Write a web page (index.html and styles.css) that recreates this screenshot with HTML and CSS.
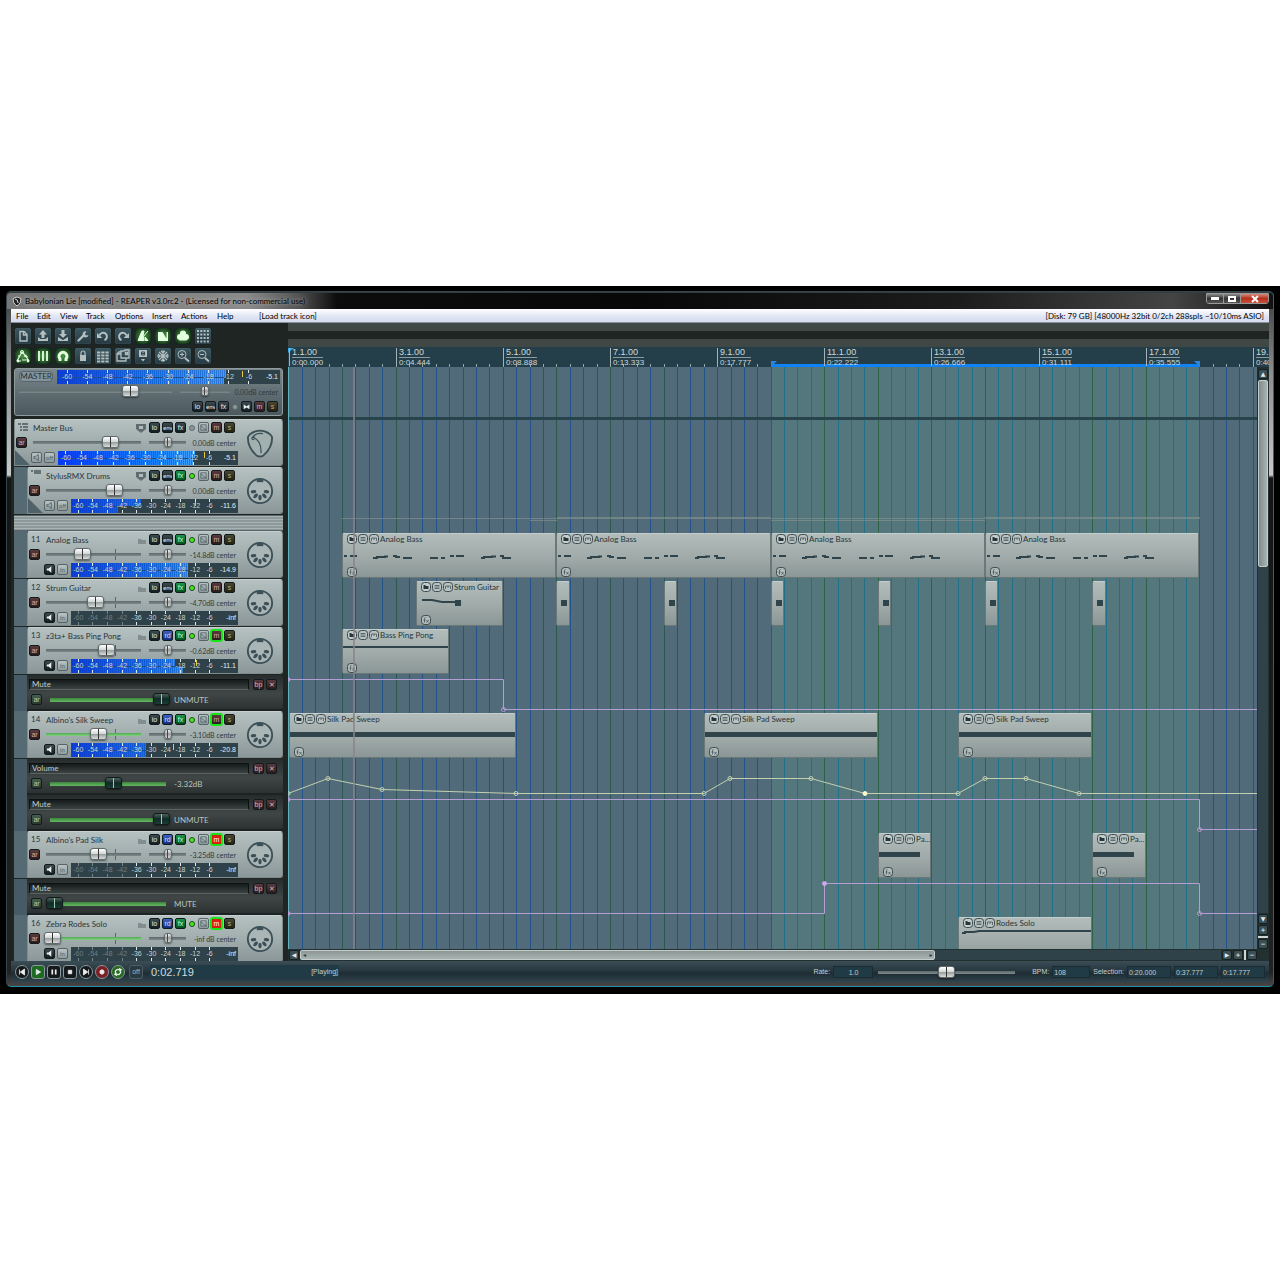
FILE: index.html
```html
<!DOCTYPE html>
<html lang="en">
<head>
<meta charset="utf-8">
<title>Babylonian Lie - REAPER</title>
<link rel="stylesheet" href="styles.css">
</head>
<body>
<svg class="sprite" width="0" height="0" aria-hidden="true">
  <symbol id="new" viewBox="0 0 18 18"><path d="M6 4.500h4l3 3v6.500H6zM9.500 5v3H13" fill="none" stroke="currentColor" stroke-width="1.400"/></symbol>
  <symbol id="open" viewBox="0 0 18 18"><path d="M9 3l4 4.500h-2.500V11h-3V7.500H5zM4 10v4h10v-4l-2.500 2h-5z" fill="currentColor"/></symbol>
  <symbol id="save" viewBox="0 0 18 18"><path d="M9 11l4-4h-2.500V3h-3v4H5zM4 10v4h10v-4l-5 3z" fill="currentColor"/></symbol>
  <symbol id="wrench" viewBox="0 0 18 18"><path d="M4.500 13.500l4.500-4.500" stroke="currentColor" stroke-width="2.400" stroke-linecap="round"/><path d="M12.500 4.500a3 3 0 1 0 2 3.500l-2.500 .5-1-1.500z" fill="currentColor"/></symbol>
  <symbol id="undo" viewBox="0 0 18 18"><path d="M5.500 8.500a3.800 3.800 0 1 1 5 4.600" fill="none" stroke="currentColor" stroke-width="2"/><path d="M3 6v5h5.500z" fill="currentColor"/></symbol>
  <symbol id="redo" viewBox="0 0 18 18"><path d="M12.500 8.500a3.800 3.800 0 1 0-5 4.600" fill="none" stroke="currentColor" stroke-width="2"/><path d="M15 6v5H9.500z" fill="currentColor"/></symbol>
  <symbol id="metronome" viewBox="0 0 18 18"><path d="M4 13.500L8 4h2l-1 5 1 4.500zM9 10l5-6M11 10l3 3.500h-3z" fill="currentColor" stroke="currentColor" stroke-width="1"/></symbol>
  <symbol id="xfade" viewBox="0 0 18 18"><path d="M4 5h4.500l4 6.500V5H14v9H4z" fill="currentColor"/></symbol>
  <symbol id="group" viewBox="0 0 18 18"><circle cx="9" cy="6.500" r="3" fill="currentColor"/><circle cx="6" cy="10" r="3" fill="currentColor"/><circle cx="12" cy="10" r="3" fill="currentColor"/><path d="M5 13.500h8l-4-4z" fill="currentColor"/></symbol>
  <symbol id="dots" viewBox="0 0 18 18"><path d="M3 4h12M3 7.500h12M3 11h12M3 14.500h12" stroke="currentColor" stroke-width="2" stroke-dasharray="2 1.300"/></symbol>
  <symbol id="env" viewBox="0 0 18 18"><path d="M3 14l5-9 3 3 4 6M4 9h2m2 4h4m-8 1h3m6-5v4" fill="none" stroke="currentColor" stroke-width="1.100"/><circle cx="8" cy="5" r="1.500" fill="none" stroke="currentColor"/><circle cx="11.500" cy="9" r="1.300" fill="currentColor"/><circle cx="4" cy="14" r="1.400" fill="currentColor"/><circle cx="14" cy="14" r="1.400" fill="currentColor"/></symbol>
  <symbol id="bars" viewBox="0 0 18 18"><path d="M5 4v10M9 4v10M13 4v10" stroke="currentColor" stroke-width="1.800"/></symbol>
  <symbol id="snap" viewBox="0 0 18 18"><path d="M6 14v-2a4 4 0 1 1 6 0v2" fill="none" stroke="currentColor" stroke-width="3"/></symbol>
  <symbol id="lock" viewBox="0 0 18 18"><path d="M6 8h6v6H6z" fill="currentColor"/><path d="M7 8V6a2 2 0 0 1 4 0v2" fill="none" stroke="currentColor" stroke-width="1.200"/></symbol>
  <symbol id="table" viewBox="0 0 18 18"><path d="M3 5.500h12M3 8.500h12M3 11.500h12M3 14.500h12" stroke="currentColor" stroke-width="2" stroke-dasharray="3.300 .9"/></symbol>
  <symbol id="files" viewBox="0 0 18 18"><path d="M7 7H3v7h9v-3M3 7l2-2h2M7 11V4h3l1-1h4v8zM11.500 5.500h2v2h-2z" fill="none" stroke="currentColor" stroke-width="1.300"/></symbol>
  <symbol id="marker" viewBox="0 0 18 18"><path d="M5 3h8v7H5zM7 12h4l-2 2.500z" fill="currentColor"/><path d="M7.500 5v3h3V5zM8 6.500h2" fill="none" stroke="#33474e"/></symbol>
  <symbol id="flake" viewBox="0 0 18 18"><path d="M9 3v12M3 9h12M5 5l8 8M13 5l-8 8M7 4l2 2 2-2M7 14l2-2 2 2M4 7l2 2-2 2m10-4l-2 2 2 2" stroke="currentColor" fill="none" stroke-width="1.200"/></symbol>
  <symbol id="zin" viewBox="0 0 18 18"><circle cx="8" cy="7.500" r="4" fill="none" stroke="currentColor"/><path d="M6 7.500h4M8 5.500v4" stroke="currentColor"/><path d="M11 11l4 3.500" stroke="currentColor" stroke-width="2"/></symbol>
  <symbol id="zout" viewBox="0 0 18 18"><circle cx="8" cy="7.500" r="4" fill="none" stroke="currentColor"/><path d="M6 7.500h4" stroke="currentColor"/><path d="M11 11l4 3.500" stroke="currentColor" stroke-width="2"/></symbol>
  <symbol id="din" viewBox="0 0 30 30"><circle cx="15" cy="15" r="13" fill="#aab6b6" stroke="#3b5057" stroke-width="2"/><path d="M11.500 2h7v3.500h-7z" fill="#3b5057"/><g fill="#3b5057"><ellipse cx="15" cy="22" rx="1.800" ry="3"/><ellipse cx="15" cy="22" rx="1.800" ry="3" transform="rotate(42 15 15)"/><ellipse cx="15" cy="22" rx="1.800" ry="3" transform="rotate(-42 15 15)"/><ellipse cx="15" cy="22" rx="1.800" ry="3" transform="rotate(84 15 15)"/><ellipse cx="15" cy="22" rx="1.800" ry="3" transform="rotate(-84 15 15)"/></g></symbol>
  <symbol id="pick" viewBox="0 0 30 30"><path d="M2 9Q3 5 10 2.500 15 1 20 2.500 27 5 28 9 28 20 19 28q-4 3-8 0Q2 20 2 9z" fill="#a3b0b0" stroke="#3b5057" stroke-width="2"/><path d="M6 10Q11 3 18 5q-9-1-10 4 9 4 8 17M6 10q1 2 3 1" fill="none" stroke="#3b5057" stroke-width="1.300"/></symbol>
  <symbol id="folder" viewBox="0 0 12 10"><path d="M3 4h3l1 1h4v4H3z" fill="#808e90"/></symbol>
  <symbol id="folderbig" viewBox="0 0 12 10"><path d="M1 1h10v5L6 10 1 6zM4 3h4v3H4z" fill="#5e6c70" fill-rule="evenodd"/></symbol>
  <symbol id="phase" viewBox="0 0 10 10"><path d="M2 2h6v6H2zM2 3l6 5" fill="none" stroke="#5a6a6d"/></symbol>
  <symbol id="speaker" viewBox="0 0 10 10"><path d="M2 4h2l3-2.500v7L4 6H2z" fill="currentColor"/></symbol>
  <symbol id="speakeroff" viewBox="0 0 10 10"><path d="M2 4h2l3-2.500v7L4 6H2z" fill="none" stroke="currentColor"/></symbol>
  <symbol id="take" viewBox="0 0 10 10"><rect x=".5" y=".5" width="9" height="9" rx="3" fill="#c3cdcb" stroke="#3a4a4e"/><path d="M2.500 3h2v1h3v3h-5zM4.500 4h3v2.500h-3z" fill="#26363a"/></symbol>
  <symbol id="notes" viewBox="0 0 10 10"><rect x=".5" y=".5" width="9" height="9" rx="3" fill="#b9c4c2" stroke="#3a4a4e"/><path d="M2.500 3.500h5M2.500 5h5M2.500 6.500h5" stroke="#46565a" stroke-width=".8"/></symbol>
  <symbol id="mutei" viewBox="0 0 10 10"><rect x=".5" y=".5" width="9" height="9" rx="3" fill="#b9c4c2" stroke="#3a4a4e"/><path d="M2.500 7V4h5v3M5 4v2" fill="none" stroke="#46565a" stroke-width=".8"/></symbol>
  <symbol id="fxi" viewBox="0 0 10 10"><rect x=".5" y=".5" width="9" height="9" rx="3" fill="#b0bbb9" stroke="#3a4a4e"/><path d="M3.500 7.500V3.500q0-1 1-1M2.500 5h2M5.500 5l2 2.500m0-2.500l-2 2.500" fill="none" stroke="#46565a" stroke-width=".8"/></symbol>
  <symbol id="logo" viewBox="0 0 10 10"><path d="M1 2.500q4-3 8 0Q9 7 6 9.500H4Q1 7 1 2.500z" fill="#222" stroke="#ccc"/><path d="M3 3q3 0 3 4" fill="none" stroke="#ddd"/></symbol>
</svg>

<main class="desktop">
  <div class="window">
    <header class="titlebar">
      <svg class="logo"><use href="#logo"/></svg>
      <h1>Babylonian Lie [modified] - REAPER v3.0rc2 - (Licensed for non-commercial use)</h1>
      <div class="caption">
        <button aria-label="Minimize"><i class="min"></i></button><button aria-label="Maximize"><i class="max"></i></button><button class="close" aria-label="Close"><svg width="8" height="8" viewBox="0 0 8 8"><path d="M1 1l6 6M7 1L1 7" stroke="#fff" stroke-width="2"/></svg></button>
      </div>
    </header>
    <nav class="menu">
      <button class="m-file">File</button><button class="m-edit">Edit</button><button class="m-view">View</button><button class="m-track">Track</button><button class="m-options">Options</button><button class="m-insert">Insert</button><button class="m-actions">Actions</button><button class="m-help">Help</button>
      <span>[Load track icon]</span>
      <span class="status">[Disk: 79 GB] [48000Hz 32bit 0/2ch 288spls ~10/10ms ASIO]</span>
    </nav>

    <div class="workspace">
      <section class="panel">
        <div class="toolbar">
          <button aria-label="New"><svg><use href="#new"/></svg></button>
          <button aria-label="Open"><svg><use href="#open"/></svg></button>
          <button aria-label="Save"><svg><use href="#save"/></svg></button>
          <button aria-label="Settings"><svg><use href="#wrench"/></svg></button>
          <button aria-label="Undo"><svg><use href="#undo"/></svg></button>
          <button aria-label="Redo"><svg><use href="#redo"/></svg></button>
          <button class="on" aria-label="Metronome"><svg><use href="#metronome"/></svg></button>
          <button class="on" aria-label="Crossfade"><svg><use href="#xfade"/></svg></button>
          <button class="on" aria-label="Grouping"><svg><use href="#group"/></svg></button>
          <button aria-label="Ripple"><svg><use href="#dots"/></svg></button>
          <button class="on" aria-label="Envelopes"><svg><use href="#env"/></svg></button>
          <button class="on" aria-label="Grid"><svg><use href="#bars"/></svg></button>
          <button class="on" aria-label="Snap"><svg><use href="#snap"/></svg></button>
          <button aria-label="Lock"><svg><use href="#lock"/></svg></button>
          <button aria-label="Mixer"><svg><use href="#table"/></svg></button>
          <button aria-label="Media"><svg><use href="#files"/></svg></button>
          <button aria-label="Marker"><svg><use href="#marker"/></svg></button>
          <button aria-label="Freeze"><svg><use href="#flake"/></svg></button>
          <button aria-label="Zoom in"><svg><use href="#zin"/></svg></button>
          <button aria-label="Zoom out"><svg><use href="#zout"/></svg></button>
        </div>
        <div class="tracklist" id="tracks"></div>
      </section>

      <section class="arrange">
        <div class="band"></div>
        <div class="band lower"></div>
        <div class="ruler" id="ruler"></div>
        <div class="canvas-row">
          <div class="canvas" id="canvas">
            <svg class="layer" id="grid"></svg>
            <div class="lanes" id="lanes"></div>
            <svg class="layer over" id="overlay"></svg>
          </div>
          <div class="vscroll">
            <button aria-label="Scroll up">▲</button>
            <div class="rail"><i></i></div>
            <button aria-label="Scroll down">▼</button>
            <button aria-label="Zoom in vertically">+</button><b></b>
            <button aria-label="Zoom out vertically">−</button>
          </div>
        </div>
        <div class="hscroll">
          <button aria-label="Scroll left">◀</button>
          <div class="rail"><i><span>◂</span><span>▸</span></i></div>
          <button aria-label="Scroll right">▶</button>
          <button aria-label="Zoom in horizontally">+</button><b></b>
          <button aria-label="Zoom out horizontally">−</button>
        </div>
      </section>
    </div>

    <footer class="transport">
      <div class="keys">
        <button aria-label="Start"><svg viewBox="0 0 14 14"><path d="M4 4v6M10 3.500v7L5 7z"/></svg></button>
        <button class="play" aria-label="Play"><svg viewBox="0 0 14 14"><path d="M5 4v6l5-3z"/></svg></button>
        <button class="sq" aria-label="Pause"><svg viewBox="0 0 14 14"><path d="M4 4h2v6H4zM8 4h2v6H8z" stroke="none"/></svg></button>
        <button class="sq" aria-label="Stop"><svg viewBox="0 0 14 14"><path d="M5 5h4v4H5z"/></svg></button>
        <button aria-label="End"><svg viewBox="0 0 14 14"><path d="M10 4v6M4 3.500v7L9 7z"/></svg></button>
        <button class="rec" aria-label="Record"><svg viewBox="0 0 14 14"><circle cx="7" cy="7" r="2.500"/></svg></button>
        <button class="loop" aria-label="Repeat"><svg viewBox="0 0 14 14"><path d="M4 8a3 3 0 0 1 5-3M10 6a3 3 0 0 1-5 3" fill="none" stroke-width="1.500"/><path d="M8 2l4 2-3 3zM6 12l-4-2 3-3z" stroke="none"/></svg></button>
        <button class="off">off</button>
      </div>
      <div class="clock"><output>0:02.719</output><span>[Playing]</span></div>
      <div class="fields">
        <label for="rate">Rate:</label><input id="rate" class="field rate" value="1.0">
        <input type="range" class="knob rateslider" value="50" aria-label="Playback rate">
        <label for="bpm">BPM:</label><input id="bpm" class="field bpm" value="108">
        <label for="sel">Selection:</label>
        <input id="sel" class="field" value="0:20.000"><input class="field" value="0:37.777" aria-label="Selection end"><input class="field" value="0:17.777" aria-label="Selection length">
      </div>
    </footer>
  </div>
</main>
<script src="app.js"></script>
</body>
</html>
```
FILE: styles.css
```css
* { box-sizing: border-box; }
body { margin: 0; min-height: 100vh; display: flex; align-items: center; background: #fff; font: 8px/10px "Liberation Sans", Arial, sans-serif; }
button, input { font: inherit; margin: 0; padding: 0; border: 0; }
svg { display: block; }
.sprite { position: absolute; }
.desktop { flex: 1; min-width: 0; background: #000; padding: 5px 6px 7px; }
.window {
  padding: 1px 4px 3px; border: 1px solid #30474e; border-bottom-color: #2390a8; border-right-color: #1d6b7c; border-radius: 5px;
  background: linear-gradient(#3a3a3a 0, #8c8c8c 80px, #c8c8c8 183px, #151515 186px, #222 680px, #4a4545);
}

/* Title and menu */
.titlebar { display: flex; align-items: center; height: 16px; margin: 0 -4px; padding-left: 5px; background: linear-gradient(90deg, #777 0, #8a8a8a 240px, #555 290px, #0c0c0c 330px, #080808 50%, #1c1c1c 75%, #444 92%, #111); border-radius: 4px 4px 0 0; }
.logo { width: 10px; height: 10px; margin-right: 3px; }
.titlebar h1 { margin: 0; font: 8px/12px Lato, sans-serif; color: #000; text-shadow: 0 0 4px #ccc; white-space: nowrap; flex: 1; }
.caption { display: flex; align-self: flex-start; margin-right: 4px; border: 1px solid #999; border-radius: 0 0 3px 3px; overflow: hidden; }
.caption button { width: 17px; height: 9px; display: grid; place-items: center; background: linear-gradient(#8c8c8c, #333 50%, #555); border-right: 1px solid #999; }
.caption .close { width: 27px; background: linear-gradient(#d48a7c, #b5301c 50%, #c9503a); border: 0; }
.min { width: 8px; height: 3px; background: #fff; }
.max { width: 8px; height: 6px; border: 2px solid #fff; }
.menu { display: flex; align-items: center; height: 14px; padding: 1px 5px 0; background: linear-gradient(#fff, #dfe4f4 60%, #d5dbee); font: 8px/12px Lato, sans-serif; color: #000; border-bottom: 1px solid #8a8f9c; white-space: nowrap; }
.menu button { background: none; text-align: left; color: inherit; }
.m-view { width: 26px; } .m-track { width: 29px; }
.m-options { width: 37px; } .m-insert { width: 29px; } .m-actions { width: 36px; }
.m-file { width: 21px; } .m-edit { width: 23px; } .m-help { width: 42px; }
.status { margin-left: auto; }

.workspace { display: grid; grid-template-columns: 277px minmax(0, 1fr); height: 638px; background: #1e2523; }
.panel { display: flex; flex-direction: column; min-height: 0; padding: 4px 5px 0 3px; }

/* Toolbar */
.toolbar { display: grid; grid-template-columns: repeat(10, 18px); align-content: start; gap: 2px; height: 40px; flex: none; }
.toolbar button { width: 18px; height: 18px; border-radius: 3px; border: 1px solid #1a2528; background: linear-gradient(#3c5760, #263a42); color: #b4bfc0; box-shadow: inset 0 0 1px #7b9199; }
.toolbar svg { width: 18px; height: 18px; margin: -1px; }
.toolbar .on { color: #e4ffe0; background: radial-gradient(#4d9a4a, #16351a 80%); box-shadow: inset 0 0 1px #000; }

/* Track list */
.tracklist { flex: 1; min-height: 0; overflow: hidden; }
.track { display: flex; height: 48px; padding-bottom: 1px; color: #29363b; }
.indent { width: 13px; background: #566a74; }
.face { flex: 1; min-width: 0; display: grid; grid-template-columns: 15px minmax(0, 1fr) 44px; background: linear-gradient(#b5c0c0, #a2aeae 50%, #8b9798); border: 1px solid #7f8b8c; border-top-color: #c6cfce; border-radius: 2px 3px 3px 0; }
.face.corner { background: linear-gradient(45deg, #4f626a 10px, transparent 11px), linear-gradient(#b5c0c0, #a2aeae 50%, #8b9798); }
.side { display: flex; flex-direction: column; align-items: flex-start; padding: 2px 0 0 1px; gap: 5px; }
.side .num { height: 10px; padding-left: 2px; font: 8px/11px Lato, sans-serif; }
.body { padding-left: 1px; display: flex; flex-direction: column; }
.line { display: flex; align-items: center; height: 15px; }
.line .name { flex: 1; padding-left: 2px; font: 8px/12px Lato, sans-serif; white-space: nowrap; }
.line svg.fold { width: 12px; height: 10px; margin-right: 2px; }
.art { display: grid; place-items: center; }
.art svg { width: 28px; height: 30px; }
.btns { display: flex; align-items: center; gap: 2px; margin-right: 3px; }
.chip { width: 11px; height: 11px; display: grid; place-items: center; border-radius: 2px; border: 1px solid #111a1d; background: linear-gradient(#3c4a50, #141d21); color: #e8eeee; font: 7px/8px "Liberation Sans", sans-serif; overflow: hidden; }
.chip svg { width: 9px; height: 9px; }
.chip.tiny { font: 6px/8px Lato, sans-serif; }
.chip.ar, .chip.m, .chip.bp { background: linear-gradient(#5b3a3d, #2c1a1c); color: #cdb3b3; }
.chip.s { background: linear-gradient(#4b4630, #25210f); color: #b9ae82; }
.chip.fx { background: linear-gradient(#1d9648, #06501e); color: #cdffd8; }
.chip.rd { background: linear-gradient(#3b62c4, #142c7c); color: #d5e2ff; }
.chip.muted { outline: 2px solid #17e51a; outline-offset: -1px; }
.chip.hot { background: #dd1c12; color: #fff; }
.chip.gray { background: linear-gradient(#b9c3c3, #8f9b9c); border-color: #56646a; color: #56646a; }
.chip.green { background: linear-gradient(#47604e, #26382c); color: #b5cbb9; }
.led { width: 8px; display: grid; place-items: center; background: none; }
.led i { width: 6px; height: 6px; border-radius: 50%; border: 1px solid #1f4d1f; background: #46e61c; }
.led.dark i { background: #8b9799; border-color: #5c6a6d; }

/* Sliders */
.knob { appearance: none; -webkit-appearance: none; background: none; height: 13px; min-width: 0; display: block; }
.knob::-webkit-slider-runnable-track { height: 13px; background: linear-gradient(#5d6a6c, #7d898a) center / calc(100% - 4px) 3px no-repeat; }
.knob::-webkit-slider-thumb { appearance: none; -webkit-appearance: none; width: 17px; height: 12px; border-radius: 3px; border: 1px solid #60696b; background: linear-gradient(90deg, transparent 7px, #333 7px, #333 8px, transparent 8px), linear-gradient(#fff, #d5d9d8 45%, #9aa1a1 55%, #d9dddc); box-shadow: 0 1px 2px #0007; }
.fader { flex: 1; background: linear-gradient(#5b686b, #5b686b) 72% 50% / 1px 11px no-repeat; }
.fader.green::-webkit-slider-runnable-track { background-image: linear-gradient(#55a855, #7fd37f); }
.pan { width: 41px; margin-left: 4px; }
.pan::-webkit-slider-thumb { width: 8px; height: 10px; margin-top: 1px; background: linear-gradient(90deg, transparent 2px, #444 2px, #444 3px, transparent 3px), linear-gradient(#fff, #999 50%, #ddd); }
.db { width: 48px; margin-right: 2px; text-align: right; font: 7px/10px Lato, sans-serif; white-space: nowrap; color: #2c3a3f; }

/* Meters */
.meter { flex: 1; height: 14px; position: relative; display: flex; background: #2f4149; color: #c9d4d6; font-size: 7px; line-height: 14px; }
.fill { position: absolute; left: 0; height: 7px; top: 0; background: repeating-linear-gradient(90deg, transparent 0 1px, #0a3a9c66 1px 2px), linear-gradient(90deg, #0a3cf5 0, #1a86ff 100px, #3fa0ff); }
.fill + .fill { top: 7px; height: 7px; border-top: 1px solid #1d4f8d; }
.peak { position: absolute; top: 1px; height: 6px; width: 1px; background: #e7c840; }
.scale { position: relative; flex: 1; display: flex; margin-right: 21px; }
.scale span { flex: 1; width: 0; display: flex; justify-content: center; background: linear-gradient(#dfe8ea, #dfe8ea) 50% 0 / 1px 3px no-repeat, linear-gradient(#dfe8ea, #dfe8ea) 50% 100% / 1px 3px no-repeat; }
.meter.idle .scale span:nth-child(-n+4) { opacity: .4; }
.val { position: absolute; right: 2px; color: #e6eeee; }

/* Master */
.master { height: 48px; margin: 1px 0 3px; padding: 0 2px; border-radius: 3px; border: 1px solid #8d9a9e; background: linear-gradient(#7b898f, #5c6a70 60%, #4c595e); }
.master .tag { width: 34px; margin: 0 4px 0 2px; border: 1px solid #56656b; border-radius: 4px; text-align: center; color: #26343a; font: 8px/9px Lato, sans-serif; background: #84939a; }
.master .db { width: 46px; }
.master .fader { background: none; }
.master .knob { flex: 144; }
.master .pan { flex: none; width: 54px; }
.master .btns { margin-left: auto; margin-right: 2px; }

.spacer { height: 16px; border-top: 1px solid #59656a; border-bottom: 1px solid #59656a; background: repeating-linear-gradient(#a9b4b4 0 1px, #8c9899 1px 3px); }

/* Envelope rows */
.envrow { height: 36px; display: flex; }
.envrow .indent { background: #465b66; }
.envface { flex: 1; min-width: 0; padding: 4px 6px 0 2px; background: linear-gradient(#262c2c, #3f4645 55%, #2c3232); border-bottom: 2px solid #1d2322; border-radius: 0 3px 3px 0; }
.envhead { display: flex; gap: 2px; align-items: center; }
.envname { flex: 1; height: 11px; margin-right: 2px; padding-left: 2px; font: 8px/9px Lato, sans-serif; color: #c2cccc; background: linear-gradient(#151b1b, #3a4242); border: 1px solid #0d1211; border-bottom-color: #5a6363; }
.envline { display: flex; align-items: center; height: 19px; color: #b7c1c1; font: 8px/10px Lato, sans-serif; }
.envline .chip { margin-left: 2px; }
.envslider { width: 124px; margin: 0 4px 0 4px; }
.envslider::-webkit-slider-runnable-track { background: linear-gradient(#3e873e, #62b862) center / calc(100% - 8px) 4px no-repeat; }
.envslider::-webkit-slider-thumb { width: 17px; background: linear-gradient(90deg, transparent 7px, #9fc8ae 7px, #9fc8ae 8px, transparent 8px), linear-gradient(#4b605b, #0e2a25 50%, #1c3c35); border-color: #101a18; }

/* Arrange view */
.arrange { display: flex; flex-direction: column; min-width: 0; min-height: 0; }
.band { height: 8px; background: #404846; flex: none; }
.band.lower { margin-top: 8px; }
.ruler { position: relative; flex: none; height: 20px; background: #243f49; overflow: hidden; color: #d0d8da; }
.mark { position: absolute; top: 1px; height: 18px; padding-left: 2px; border-left: 1px solid #a6b2b5; display: flex; flex-direction: column; align-items: flex-start; font-size: 9px; line-height: 9px; }
.mark small { font-size: 8px; line-height: 9px; border-top: 1px solid #8b9a9f; }
.tick { position: absolute; bottom: 0; width: 1px; height: 3px; background: #9aa8ac; }
.range { position: absolute; bottom: 0; height: 3px; background: #0f83f5; }
.range::before, .range::after { content: ""; position: absolute; bottom: 0; border: 3px solid transparent; border-top-color: #2a86dd; border-left-color: #2a86dd; }
.range::after { right: 0; border-left-color: transparent; border-right-color: #2a86dd; }
.range::before { left: 0; }
.canvas-row { flex: 1; display: flex; min-height: 0; }
.canvas { position: relative; flex: 1; min-width: 0; overflow: hidden; background: #526b7a; }
.layer { position: absolute; inset: 0; width: 100%; height: 100%; }
.over { pointer-events: none; }
.lanes { position: relative; }
.lane { position: relative; }
.clip { position: absolute; top: 1px; height: 45px; overflow: hidden; border: 1px solid #6b7878; border-top-color: #c4cecc; border-radius: 2px; background: linear-gradient(#b1bcbb, #9faaa9 55%, #8b9796); color: #26363a; font: 8px/10px Lato, sans-serif; }
.cliphead { display: flex; align-items: center; gap: 1px; padding: 0 0 0 4px; height: 10px; }
.cliphead svg { width: 10px; height: 10px; flex: none; }
.cliphead span { white-space: nowrap; }
.clip .fxmark { position: absolute; left: 4px; bottom: 0; width: 10px; height: 10px; }
.clip .midi { position: absolute; left: 0; top: 0; width: 100%; height: 100%; }

/* Scroll bars */
.vscroll { width: 12px; display: flex; flex-direction: column; padding: 2px 1px 0; gap: 1px; background: #22302f; }
.hscroll { height: 12px; flex: none; display: flex; padding: 1px 12px 1px 1px; gap: 1px; background: #22302f; }
.vscroll button, .hscroll button { width: 10px; height: 10px; flex: none; border-radius: 2px; border: 1px solid #15201f; background: #3b4f56; color: #e0e8e8; font: bold 6px/8px "DejaVu Sans", sans-serif; }
.rail { flex: 1; background: #2f4149; display: flex; }
.vscroll .rail { flex-direction: column; }
.rail i { display: flex; justify-content: space-between; flex: none; height: 35%; border-radius: 2px; border: 1px solid #c4cdcb; background: linear-gradient(90deg, #7f8c8b, #a9b4b2); font: normal 6px/8px "DejaVu Sans", sans-serif; color: #2f3d40; padding: 0 2px; }
.hscroll .rail i { width: 69%; height: auto; background: linear-gradient(#8b9796, #a9b4b2); }
.vscroll b { height: 2px; background: #cdd5d5; } .hscroll b { width: 2px; background: #cdd5d5; }

/* Transport */
.transport { display: flex; align-items: center; height: 22px; padding: 0 4px; background: linear-gradient(#3b4d56, #27373f 45%, #1e2c33 55%, #33454d); color: #c4ced0; font-size: 7px; }
.keys { display: flex; gap: 2px; }
.keys button { width: 14px; height: 14px; border-radius: 50%; border: 1px solid #8b979a; background: #15191b; color: #e8eeee; }
.keys svg { width: 12px; height: 12px; fill: currentColor; stroke: currentColor; stroke-width: 1; }
.keys .play { background: #1d6a22; border-radius: 3px; } .keys .sq { border-radius: 3px; }
.keys .rec { background: #7a1f24; } .keys .loop { background: #246a1f; }
.keys .off { margin-left: 2px; border-radius: 3px; border-color: #4d5e65; background: #2b3a41; color: #a8b4b8; }
.clock { display: flex; align-items: center; justify-content: space-between; width: 189px; height: 14px; margin-left: 7px; padding: 0 1px; background: #203b45; }
.clock output { font-size: 11px; color: #d2dcde; }
.fields { margin-left: auto; display: flex; align-items: center; gap: 3px; }
.field { width: 44px; height: 12px; padding-left: 1px; background: #203b45; border: 1px solid #1a2c33; color: #c4ced0; }
.rate { width: 40px; text-align: center; }
.bpm { width: 38px; }
.rateslider { width: 141px; margin-right: 12px; }
```
FILE: app.js
```javascript
const BEAT = 13.394;
const x = b => Math.round(b * BEAT + 0.5);
const use = (id, cls = '') => `<svg class="${cls}"><use href="#${id}"/></svg>`;

const LABELS = [-60, -54, -48, -42, -36, -30, -24, -18, -12, -6];
function meter(l, r, peaks, val) {
  return `<div class="meter ${l ? '' : 'idle'}"><i class="fill" style="width:${l}%"></i><i class="fill" style="width:${r}%"></i>` +
    peaks.map(p => `<i class="peak" style="left:${p}%"></i>`).join('') +
    `<div class="scale">${LABELS.map(n => `<span>${n}</span>`).join('')}</div><span class="val">${val}</span></div>`;
}
const chip = (t, cls = '', label = t) => `<button class="chip ${cls}" aria-label="${label}">${t}</button>`;

function track(t) {
  const second = t.rd ? chip('rd', 'rd') : chip('env', 'tiny');
  const tree = t.top ? 'M0 2h3M4 2h6M2 5h2M5 5h5M2 8h2M5 8h5' : 'M0 1h2M3 1h7M3 3h7';
  return `<div class="track">${t.top ? '' : '<div class="indent"></div>'}
    <div class="face ${t.folder ? 'corner' : ''}">
      <div class="side"><span class="num">${t.num || `<svg width="10" height="10" viewBox="0 0 10 10"><path d="${tree}" stroke="#4b5a5e" stroke-width="1.300"/></svg>`}</span>${chip('ar', 'ar')}</div>
      <div class="body">
        <div class="line"><span class="name">${t.name}</span>${use(t.folder ? 'folderbig' : 'folder', 'fold')}
          <div class="btns">${chip('io')}${second}${chip('fx', t.top ? '' : 'fx')}<button class="led ${t.top ? 'dark' : ''}" aria-label="fx bypass"><i></i></button>
          ${chip(use('phase'), 'gray', 'phase')}${chip('m', 'm ' + (t.mute || ''))}${chip('s', 's')}</div></div>
        <div class="line"><input type="range" class="knob fader ${t.auto ? 'green' : ''}" value="${t.vol}" aria-label="${t.name} volume">
          <input type="range" class="knob pan" value="50" aria-label="${t.name} pan"><span class="db">${t.db} center</span></div>
        <div class="line"><div class="btns">${chip(use(t.folder ? 'speakeroff' : 'speaker'), t.folder ? 'gray' : '', 'monitor')}${chip(t.folder ? 'off' : 'in', 'gray tiny')}</div>${meter(t.l, t.r, t.peaks || [], t.val)}</div>
      </div>
      <div class="art">${use(t.top ? 'pick' : 'din')}</div>
    </div></div>`;
}
function env(e) {
  return `<div class="envrow"><div class="indent"></div><div class="envface">
    <div class="envhead"><span class="envname">${e.name}</span>${chip('bp', 'bp')}${chip('✕', 'bp', 'close')}</div>
    <div class="envline">${chip('ar', 'green')}<input type="range" class="knob envslider" value="${e.pos}" aria-label="${e.name}"><span>${e.text}</span></div>
  </div></div>`;
}
const master = `<div class="master">
  <div class="line"><span class="tag">MASTER</span>${meter(76, 75, [83], '-5.1')}</div>
  <div class="line"><input type="range" class="knob fader" value="75" aria-label="Master volume"><input type="range" class="knob pan" value="50" aria-label="Master pan"><span class="db">0.00dB center</span></div>
  <div class="line"><div class="btns">${chip('io')}${chip('env', 'tiny')}${chip('fx')}<button class="led dark" aria-label="fx bypass"><i></i></button>${chip('⧓', '', 'mono')}${chip('m', 'm')}${chip('s', 's')}</div></div>
</div>`;

// Height, control panel markup and clips (start beat, end beat, kind) of every row
const rows = [
  [53, master],
  [48, track({ top: 1, folder: 1, name: 'Master Bus', vol: 75, db: '0.00dB', l: 76, r: 75, peaks: [81], val: '-5.1' })],
  [48, track({ folder: 1, name: 'StylusRMX Drums', vol: 76, db: '0.00dB', l: 42, r: 28, peaks: [74], val: '-11.6' })],
  [16, '<div class="spacer"></div>'],
  [48, track({ num: 11, name: 'Analog Bass', vol: 37, db: '-14.8dB', l: 70, r: 70, val: '-14.9' }),
    [[4, 20, 'bass', 'Analog Bass'], [20, 36, 'bass', 'Analog Bass'], [36, 52, 'bass', 'Analog Bass'], [52, 68, 'bass', 'Analog Bass']]],
  [48, track({ num: 12, name: 'Strum Guitar', vol: 52, db: '-4.70dB', l: 0, r: 0, val: '-inf' }),
    [[9.5, 16, 'strum', 'Strum Guitar'], ...[20, 28, 36, 44, 52, 60].map(b => [b, b + 1, 'hit', ''])]],
  [48, track({ num: 13, name: 'z3ta+ Bass Ping Pong', vol: 66, db: '-0.62dB', rd: 1, mute: 'muted', l: 62, r: 67, peaks: [75], val: '-11.1' }),
    [[4, 12, 'line', 'Bass Ping Pong']]],
  [36, env({ name: 'Mute', pos: 100, text: 'UNMUTE' })],
  [48, track({ num: 14, name: "Albino's Silk Sweep", vol: 56, db: '-3.10dB', rd: 1, auto: 1, mute: 'muted', l: 45, r: 45, peaks: [61], val: '-20.8' }),
    [[0, 17, 'thick', 'Silk Pad Sweep'], [31, 44, 'thick', 'Silk Pad Sweep'], [50, 60, 'thick', 'Silk Pad Sweep']]],
  [36, env({ name: 'Volume', pos: 55, text: '-3.32dB' })],
  [36, env({ name: 'Mute', pos: 100, text: 'UNMUTE' })],
  [48, track({ num: 15, name: "Albino's Pad Silk", vol: 56, db: '-3.25dB', rd: 1, mute: 'muted hot', l: 0, r: 0, val: '-inf' }),
    [[44, 48, 'pad', 'Pa...'], [60, 64, 'pad', 'Pa...']]],
  [36, env({ name: 'Mute', pos: 0, text: 'MUTE' })],
  [48, track({ num: 16, name: 'Zebra Rodes Solo', vol: 0, db: '-inf dB', rd: 1, auto: 1, mute: 'muted hot', l: 0, r: 0, val: '-inf' }),
    [[50, 60, 'rodes', 'Rodes Solo']]]
];
document.getElementById('tracks').innerHTML = rows.map(r => r[1]).join('');

const NOTES = {
  bass: '<path d="M1 22h3m3 0h7M30 24h4v-1h8v-.5h3M50 22h3v1h4m3 1h9M87 24h8m3 0h4m5-2h4m2 0h8M138 24h3v-1h8v-.5h4m4-.5h3v2h8" stroke-width="2"/>',
  strum: '<path d="M5 18h10l10 2h13" stroke-width="2"/><path d="M38 18h6v6h-6z" fill="#30454b" stroke="none"/>',
  hit: '<path d="M4 18h6v6H4z" fill="#30454b" stroke="none"/>',
  line: '<path d="M0 17h2000" stroke-width="2"/>',
  thick: '<path d="M0 20.500h2000" stroke-width="5"/>',
  pad: '<path d="M0 20.500h41" stroke-width="5"/>',
  rodes: '<path d="M3 15h3v-1h9l5-1h2000" stroke-width="2"/>'
};
document.getElementById('lanes').innerHTML = rows.map(([h, , clips = []]) =>
  `<div class="lane" style="height:${h}px">${clips.map(([a, b, k, name]) =>
    `<div class="clip" style="left:${x(a)}px;width:${x(b) - x(a)}px">
      <svg class="midi" fill="none" stroke="#30454b">${NOTES[k]}</svg>
      ${name ? `<div class="cliphead">${use('take')}${use('notes')}${use('mutei')}<span>${name}</span></div>${use('fxi', 'fxmark')}` : ''}</div>`).join('')}</div>`).join('');

// Bar and beat lines
let g = `<rect x="${x(36)}" width="${x(68) - x(36)}" height="100%" fill="#54777d"/>`;
for (let b = 1; b <= 140; b++) {
  const sel = b >= 36 && b <= 68;
  const c = b % 4 ? (sel ? '#246f88' : '#22548b') : (sel ? '#2d6248' : '#2a5a4c');
  g += `<rect x="${x(b)}" width="1" height="100%" fill="${c}"/>`;
}
document.getElementById('grid').innerHTML = g + '<rect y="50" width="100%" height="3" fill="#27444c"/><rect width="1" height="100%" fill="#5fb3bd"/>';

const TIMES = ['0:00.000', '0:04.444', '0:08.888', '0:13.333', '0:17.777', '0:22.222', '0:26.666', '0:31.111', '0:35.555', '0:40.000'];
let r = '';
for (let b = 1; b < 73; b++) r += `<i class="tick" style="left:${x(b)}px"></i>`;
r += `<div class="range" style="left:${x(36)}px;width:${x(68) - x(36) + 1}px"></div>`;
TIMES.forEach((t, i) => { r += `<div class="mark" style="left:${x(i * 8)}px"><span>${i * 2 + 1}.1.00</span><small>${t}</small></div>`; });
document.getElementById('ruler').innerHTML = r + '<svg width="6" height="6"><path d="M0 1h6L0 6z" fill="#3aa8e8"/></svg>';

// Envelopes, coordinates relative to the canvas
const dot = (px, py, c, full) => `<circle cx="${px}" cy="${py}" r="2" stroke="${c}" fill="${full ? c : 'none'}"/>`;
const P = '#b49cd4', Y = '#c3d0b0', END = 4000;
const vol = [[0, 426.5], [40, 411.5], [94, 422.5], [228, 426.5], [416, 426.5], [442, 411.5], [523, 411.5], [577, 426.5], [670, 426.5], [697, 411.5], [738, 411.5], [791, 426.5]];
document.getElementById('overlay').innerHTML = `
  <g fill="none" stroke="#8b9490"><path d="M54 151.500H912M242 153.500H269M269 150.500H483M483 153.500H697M697 150.500H912" opacity=".6"/></g>
  <g fill="none" stroke="${P}">
    <path d="M0 312.500H215.500V342.500H${END}M0 432.500H911.500V462.500H${END}M0 546.500H536.500V516.500H911.500V546.500H${END}"/>
    ${dot(0, 312.5, P, 1)}${dot(215.5, 342.5, P)}${dot(0, 432.5, P, 1)}${dot(911.5, 462.5, P)}${dot(0, 546.5, P, 1)}${dot(536.5, 516.5, '#c9a8ea', 1)}${dot(911.5, 546.5, P)}
  </g>
  <g fill="none" stroke="${Y}"><path d="M${vol.map(p => p.join(' ')).join('L')}H${END}"/>${vol.map((p, i) => dot(p[0], p[1], i === 7 ? '#fff6cc' : Y, i === 7)).join('')}</g>
  <path d="M66 0V600" stroke="#8a8389" stroke-width="1.500"/>`;
```
